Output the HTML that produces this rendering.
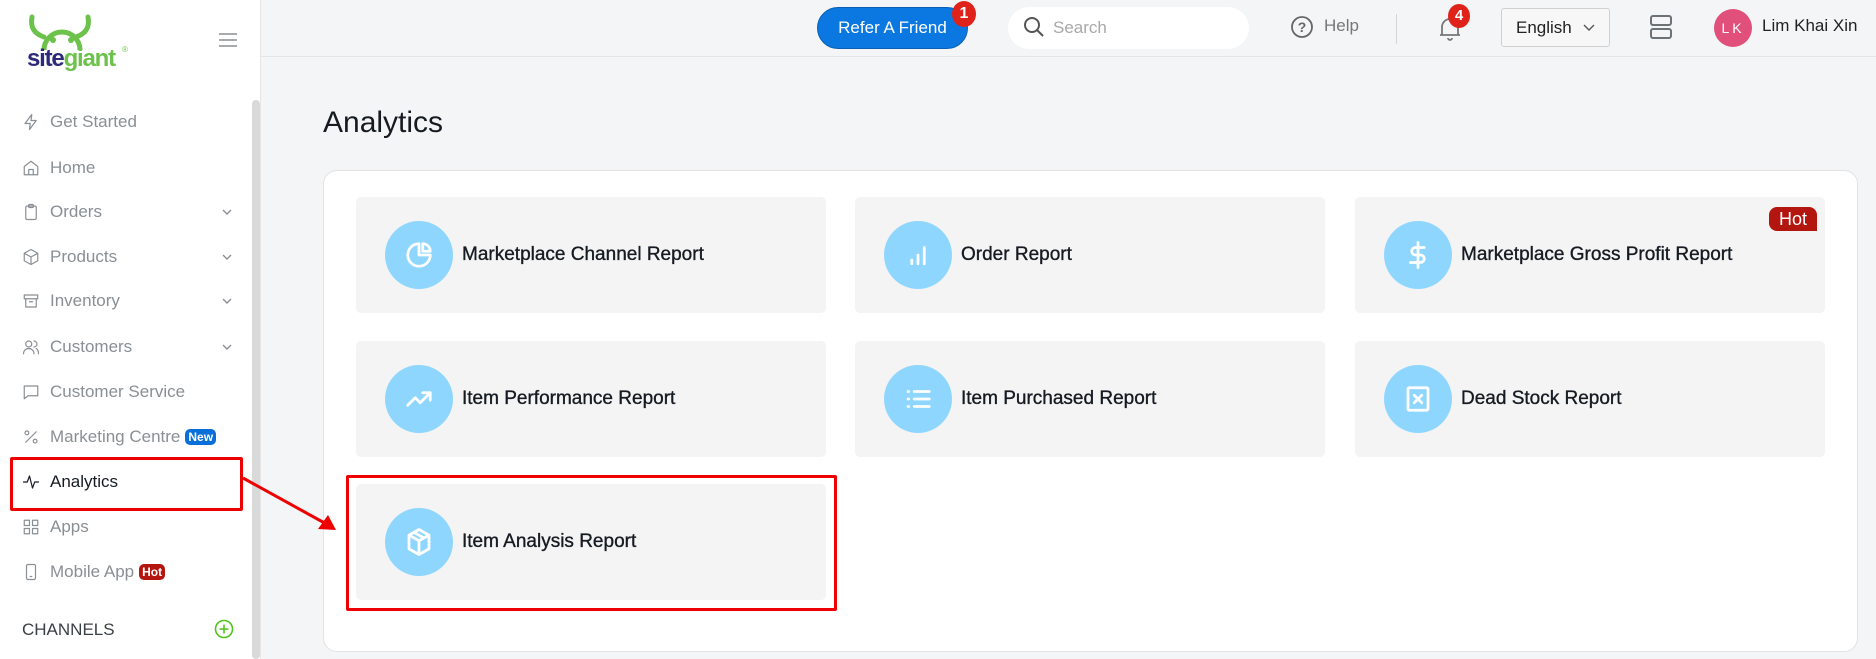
<!DOCTYPE html>
<html><head><meta charset="utf-8"><style>
*{box-sizing:border-box;margin:0;padding:0}
body{width:1876px;height:659px;overflow:hidden;background:#f4f5f7;font-family:"Liberation Sans",sans-serif;position:relative}
.abs{position:absolute}
#side{left:0;top:0;width:261px;height:659px;background:#fff;border-right:1px solid #e6e6e6}
#scroll{left:252px;top:100px;width:8px;height:559px;background:#d9d9d9;border-radius:4px}
.mi{position:absolute;left:22px;height:24px;display:flex;align-items:center;font-size:17px;color:#8a8f94}
.mi svg{width:18px;height:18px;margin-right:10px;stroke:#8a8f94;fill:none;stroke-width:1.6;stroke-linecap:round;stroke-linejoin:round}
.chev{position:absolute;left:222px;width:10px;height:10px}
.badge{font-size:12px;font-weight:bold;color:#fff;border-radius:5px;padding:1px 3px;margin-left:5px}
#top{left:261px;top:0;width:1615px;height:57px;border-bottom:1px solid #e3e4e6;background:#f4f5f7}
.tile{position:absolute;width:470px;height:116px;background:#f4f4f4;border-radius:5px}
.tile .c{position:absolute;left:29px;top:24px;width:68px;height:68px;border-radius:50%;background:#8fd6ff;display:flex;align-items:center;justify-content:center}
.tile .c svg{width:30px;height:30px;stroke:#fff;fill:none;stroke-width:2.2;stroke-linecap:round;stroke-linejoin:round}
.tile .t{position:absolute;left:106px;top:0;line-height:116px;font-size:19px;color:#161b22;-webkit-text-stroke:0.35px #161b22}
</style></head><body>
<div id="side" class="abs"></div>
<div id="scroll" class="abs"></div>
<!-- logo -->
<svg class="abs" style="left:0;top:0" width="140" height="80" viewBox="0 0 140 80">
<path d="M32 17 C30 28 35 34 44 37 M88 17 C90 28 85 34 76 37" stroke="#6cc24a" stroke-width="5" fill="none" stroke-linecap="round"/>
<path d="M44 50 A18 18 0 0 1 80 50" stroke="#6cc24a" stroke-width="5" fill="none"/>
<circle cx="53" cy="40" r="3" fill="#6cc24a"/><circle cx="71" cy="40" r="3" fill="#6cc24a"/>
<text x="27" y="66" font-family="Liberation Sans" font-weight="bold" font-size="24" fill="#2d2a7a" letter-spacing="-1.2">site<tspan fill="#6cc24a">giant</tspan></text>
<text x="122" y="52" font-size="8" fill="#6cc24a">®</text>
</svg>
<svg class="abs" style="left:218px;top:32px" width="20" height="16"><path d="M1 2h18M1 8h18M1 14h18" stroke="#8a8f94" stroke-width="1.6"/></svg>

<div class="mi" style="top:110px"><svg viewBox="0 0 24 24"><path d="M13 2L4 14h7l-1 8 9-12h-7z"/></svg>Get Started</div>
<div class="mi" style="top:156px"><svg viewBox="0 0 24 24"><path d="M3 10l9-7 9 7v11H3z M9 21v-7h6v7"/></svg>Home</div>
<div class="mi" style="top:200px"><svg viewBox="0 0 24 24"><rect x="5" y="4" width="14" height="18" rx="2"/><rect x="9" y="2" width="6" height="4" rx="1"/></svg>Orders</div>
<div class="mi" style="top:245px"><svg viewBox="0 0 24 24"><path d="M12 2l9 5v10l-9 5-9-5V7z M3 7l9 5 9-5 M12 12v10"/></svg>Products</div>
<div class="mi" style="top:289px"><svg viewBox="0 0 24 24"><rect x="3" y="4" width="18" height="5"/><path d="M5 9v11h14V9 M10 13h4"/></svg>Inventory</div>
<div class="mi" style="top:335px"><svg viewBox="0 0 24 24"><circle cx="9" cy="8" r="4"/><path d="M2 21c0-4 3-7 7-7s7 3 7 7 M16 4a4 4 0 010 8 M19 14c2 1 3 4 3 7"/></svg>Customers</div>
<div class="mi" style="top:380px"><svg viewBox="0 0 24 24"><path d="M3 4h18v13H8l-5 4z"/></svg>Customer Service</div>
<div class="mi" style="top:425px"><svg viewBox="0 0 24 24"><path d="M19 5L5 19"/><circle cx="6.5" cy="6.5" r="2.5"/><circle cx="17.5" cy="17.5" r="2.5"/></svg>Marketing Centre<span class="badge" style="background:#0a6fd8">New</span></div>
<div class="mi" style="top:470px;color:#161b22"><svg viewBox="0 0 24 24" style="stroke:#161b22"><path d="M2 12h5l3-8 4 16 3-8h5"/></svg>Analytics</div>
<div class="mi" style="top:515px"><svg viewBox="0 0 24 24"><rect x="3" y="3" width="7" height="7"/><rect x="14" y="3" width="7" height="7"/><rect x="3" y="14" width="7" height="7"/><rect x="14" y="14" width="7" height="7"/></svg>Apps</div>
<div class="mi" style="top:560px"><svg viewBox="0 0 24 24"><rect x="6" y="2" width="12" height="20" rx="2"/><path d="M11 18h2"/></svg>Mobile App<span class="badge" style="background:#b3150f">Hot</span></div>
<div class="abs" style="left:22px;top:620px;font-size:17px;color:#3b4046">CHANNELS</div>
<svg class="abs" style="left:214px;top:619px" width="20" height="20"><circle cx="10" cy="10" r="8.5" fill="none" stroke="#52c41a" stroke-width="1.6"/><path d="M10 5.5v9M5.5 10h9" stroke="#52c41a" stroke-width="1.6"/></svg>
<svg class="chev" style="top:207px" viewBox="0 0 10 10"><path d="M1 3l4 4 4-4" stroke="#8a8f94" fill="none" stroke-width="1.4"/></svg>
<svg class="chev" style="top:252px" viewBox="0 0 10 10"><path d="M1 3l4 4 4-4" stroke="#8a8f94" fill="none" stroke-width="1.4"/></svg>
<svg class="chev" style="top:296px" viewBox="0 0 10 10"><path d="M1 3l4 4 4-4" stroke="#8a8f94" fill="none" stroke-width="1.4"/></svg>
<svg class="chev" style="top:342px" viewBox="0 0 10 10"><path d="M1 3l4 4 4-4" stroke="#8a8f94" fill="none" stroke-width="1.4"/></svg>
<div class="abs" style="left:10px;top:457px;width:233px;height:54px;border:3px solid #ee0000;border-radius:2px"></div>

<div id="top" class="abs"></div>
<div class="abs" style="left:817px;top:7px;width:151px;height:42px;background:#0a78e0;border-radius:21px;border:1px solid #0a5fb4;color:#fff;font-size:17px;line-height:40px;text-align:center">Refer A Friend</div>
<div class="abs" style="left:952px;top:1px;width:24px;height:26px;border-radius:50%;background:#e0231a;color:#fff;font-size:16px;font-weight:bold;text-align:center;line-height:26px">1</div>
<div class="abs" style="left:1008px;top:7px;width:241px;height:42px;background:#fff;border-radius:21px"></div>
<svg class="abs" style="left:1023px;top:16px" width="22" height="22"><circle cx="9" cy="9" r="7" fill="none" stroke="#555" stroke-width="2"/><path d="M14 14l6 6" stroke="#555" stroke-width="2"/></svg>
<div class="abs" style="left:1053px;top:18px;font-size:17px;color:#a8a8a8">Search</div>
<svg class="abs" style="left:1290px;top:15px" width="24" height="24"><circle cx="12" cy="12" r="10" fill="none" stroke="#666" stroke-width="1.8"/><text x="12" y="17" font-size="14" text-anchor="middle" fill="#666" font-family="Liberation Sans" font-weight="bold">?</text></svg>
<div class="abs" style="left:1324px;top:16px;font-size:17px;color:#777">Help</div>
<div class="abs" style="left:1396px;top:14px;width:1px;height:30px;background:#d6d6d6"></div>
<svg class="abs" style="left:1437px;top:14px" width="26" height="28"><path d="M5 21V13a8 8 0 0116 0v8z M3 21h20 M11 24a2 2 0 004 0" fill="none" stroke="#777" stroke-width="1.8"/></svg>
<div class="abs" style="left:1448px;top:4px;width:22px;height:24px;border-radius:50%;background:#e0231a;color:#fff;font-size:15px;font-weight:bold;text-align:center;line-height:24px">4</div>
<div class="abs" style="left:1501px;top:8px;width:109px;height:39px;border:1px solid #d0d0d0;border-radius:3px;background:#f7f7f7;font-size:17px;color:#222;line-height:37px;padding-left:14px">English</div>
<svg class="abs" style="left:1583px;top:23px" width="12" height="10"><path d="M1 2l5 5 5-5" fill="none" stroke="#555" stroke-width="1.4"/></svg>
<svg class="abs" style="left:1649px;top:14px" width="24" height="26"><rect x="2" y="2" width="20" height="9" rx="2" fill="none" stroke="#6b7378" stroke-width="2"/><rect x="2" y="15" width="20" height="9" rx="2" fill="none" stroke="#6b7378" stroke-width="2"/></svg>
<div class="abs" style="left:1714px;top:9px;width:38px;height:38px;border-radius:50%;background:#e0507a;color:#fff;font-size:14px;text-align:center;line-height:38px;letter-spacing:3px">LK</div>
<div class="abs" style="left:1762px;top:16px;font-size:17px;color:#222">Lim Khai Xin</div>

<div class="abs" style="left:323px;top:106px;font-size:30px;color:#161b22">Analytics</div>
<div class="abs" style="left:323px;top:170px;width:1535px;height:482px;background:#fff;border:1px solid #e3e3e3;border-radius:14px"></div>

<div class="tile" style="left:356px;top:197px"><div class="c"><svg viewBox="0 0 24 24"><path d="M12 3a9 9 0 109 9h-9z"/><path d="M15 3v6h6a6 6 0 00-6-6z"/></svg></div><div class="t">Marketplace Channel Report</div></div>
<div class="tile" style="left:855px;top:197px"><div class="c"><svg viewBox="0 0 24 24"><path d="M7 19v-3M12 19v-7M17 19V6"/></svg></div><div class="t">Order Report</div></div>
<div class="tile" style="left:1355px;top:197px"><div class="c"><svg viewBox="0 0 24 24"><path d="M12 2v20M17 6H10a3 3 0 000 6h4a3 3 0 010 6H6"/></svg></div><div class="t">Marketplace Gross Profit Report</div>
<div class="abs" style="left:414px;top:10px;width:48px;height:24px;background:#b3150f;border-radius:8px 8px 0 8px;color:#fff;font-size:18px;text-align:center;line-height:24px">Hot</div></div>
<div class="tile" style="left:356px;top:341px"><div class="c"><svg viewBox="0 0 24 24"><path d="M3 17l6-6 4 4 8-8M15 7h6v6"/></svg></div><div class="t">Item Performance Report</div></div>
<div class="tile" style="left:855px;top:341px"><div class="c"><svg viewBox="0 0 24 24"><path d="M9 6h12M9 12h12M9 18h12M4 6h.5M4 12h.5M4 18h.5"/></svg></div><div class="t">Item Purchased Report</div></div>
<div class="tile" style="left:1355px;top:341px"><div class="c"><svg viewBox="0 0 24 24"><rect x="4" y="3" width="16" height="18" rx="1"/><path d="M9 9l6 6M15 9l-6 6"/></svg></div><div class="t">Dead Stock Report</div></div>
<div class="tile" style="left:356px;top:484px"><div class="c"><svg viewBox="0 0 24 24"><path d="M12 2l8 4.5v11L12 22l-8-4.5v-11z M4 6.5l8 4.5 8-4.5 M12 11v11 M8 4.3l8 4.5"/></svg></div><div class="t">Item Analysis Report</div></div>
<div class="abs" style="left:346px;top:475px;width:491px;height:136px;border:3px solid #ee0000;border-radius:2px"></div>
<svg class="abs" style="left:240px;top:474px" width="100" height="62"><path d="M3 4L90 52" stroke="#ee0000" stroke-width="3"/><path d="M96 56L78 55L88 41Z" fill="#ee0000"/></svg>
</body></html>
